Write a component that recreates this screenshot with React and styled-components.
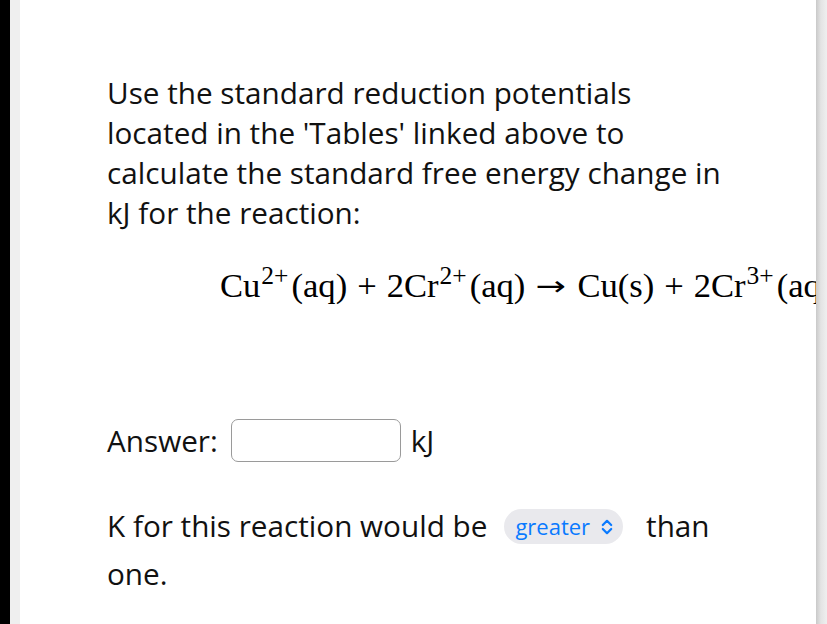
import React from "react";
import styled, { createGlobalStyle } from "styled-components";

const Global = createGlobalStyle`
  html, body { margin: 0; padding: 0; }
  body { background: #fff; font-family: "Open Sans", "Noto Sans", sans-serif; }
`;

const Page = styled.div`
  display: flex;
  height: 624px;
  width: 827px;
  overflow: hidden;
`;

const DarkEdge = styled.div`
  width: 10px;
  flex: none;
  background: #000;
`;

const Gutter = styled.div`
  width: 10px;
  flex: none;
  background: #efefef;
`;

const Scroller = styled.div`
  width: 11px;
  flex: none;
  background: linear-gradient(to right, #c9c9c9, #e4e4e4 45%, #efefef);
`;

const Card = styled.div`
  flex: 1;
  min-width: 0;
  background: #fff;
  overflow: hidden;
  padding: 73px 0 0 87px;
  color: #111;
  font-size: 29.7px;
`;

const Para = styled.p`
  margin: 0;
  width: 630px;
  line-height: 40px;
`;

const MathLine = styled.div`
  margin: 28px 0 0 113px;
  white-space: nowrap;
  font-family: "Liberation Serif", "Times New Roman", serif;
  font-size: 34.6px;
  line-height: 48px;
  color: #000;
`;

const Sup = styled.sup`
  font-size: 25.5px;
  vertical-align: 13px;
  line-height: 0;
  margin: 0 3px 0 1px;
`;

const Op = styled.span`
  margin: 0 10px;
`;

const Arrow = styled.span`
  display: inline-block;
  width: 32px;
  margin: 0 10px;
  text-align: center;
  font-family: "DejaVu Sans", sans-serif;
  font-size: 27px;
  line-height: 30px;
  transform: scaleX(1.35);
  vertical-align: 2px;
`;

const AnswerRow = styled.div`
  display: flex;
  align-items: center;
  margin-top: 110px;
  line-height: 40px;
`;

const Field = styled.div`
  width: 168px;
  height: 41px;
  border: 1.5px solid #9a9a9a;
  border-radius: 7px;
  margin: 0 10px 0 13px;
  background: #fff;
`;

const KPara = styled.p`
  margin: 40px 0 0;
  width: 630px;
  line-height: 48px;
`;

const Pill = styled.span`
  display: inline-flex;
  align-items: center;
  gap: 11px;
  height: 35px;
  padding: 0 10px 0 11px;
  margin: 0 23px 0 17px;
  border-radius: 18px;
  background: #e9e9ed;
  color: #0a7aff;
  font-size: 22px;
  vertical-align: 2px;
  line-height: 35px;
`;

function Chevrons() {
  return (
    <svg width="12" height="16" viewBox="0 0 12 16" fill="none" stroke="#0a7aff" strokeWidth="2.2" strokeLinecap="round" strokeLinejoin="round">
      <path d="M1.8 6 L6 1.8 L10.2 6" />
      <path d="M1.8 10 L6 14.2 L10.2 10" />
    </svg>
  );
}

export default function App() {
  return (
    <>
      <Global />
      <Page>
        <DarkEdge />
        <Gutter />
        <Card>
          <Para>
            Use the standard reduction potentials located in the 'Tables' linked above to calculate the standard free energy change in kJ for the reaction:
          </Para>
          <MathLine>
            Cu<Sup>2+</Sup>(aq)<Op>+</Op>2Cr<Sup>2+</Sup>(aq)<Arrow>→</Arrow>Cu(s)<Op>+</Op>2Cr<Sup>3+</Sup>(aq)
          </MathLine>
          <AnswerRow>
            Answer:<Field />kJ
          </AnswerRow>
          <KPara>
            K for this reaction would be<Pill>greater<Chevrons /></Pill>than one.
          </KPara>
        </Card>
        <Scroller />
      </Page>
    </>
  );
}
